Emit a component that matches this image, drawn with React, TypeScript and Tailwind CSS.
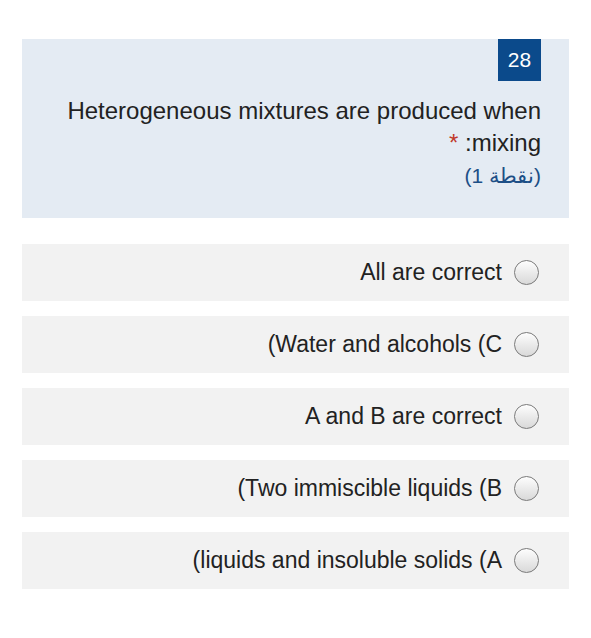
import React from 'react';

const options = [
  'All are correct',
  '(Water and alcohols (C',
  'A and B are correct',
  '(Two immiscible liquids (B',
  '(liquids and insoluble solids (A',
];

const Radio = () => (
  <span className="w-[25px] h-[25px] rounded-full border border-[#7a7a7a] bg-gradient-to-b from-[#fdfdfd] to-[#d9d9d9] shrink-0 shadow-[inset_0_1px_1px_rgba(255,255,255,0.8)]" />
);

export default function App() {
  return (
    <div className="w-[591px] h-[638px] bg-white font-['Liberation_Sans',Arial,sans-serif] text-[#222] pt-[39px] px-[22px]">
      {/* Question header */}
      <div className="bg-[#e4ebf3] h-[179px] pr-[28px] flex flex-col items-end">
        <div className="w-[43px] h-[42px] bg-[#0b4a8b] text-white text-[21px] flex items-center justify-center">
          28
        </div>
        <div className="mt-[14px] text-right text-[24px] leading-[32px]">
          <p>Heterogeneous mixtures are produced when</p>
          <p>
            <span className="text-[#c0392b]">*</span> :mixing
          </p>
          <p className="text-[#1d4f86] text-[21px] leading-[34px]">(1 نقطة)</p>
        </div>
      </div>

      {/* Options */}
      <div className="mt-[26px] flex flex-col gap-[15px]">
        {options.map((o) => (
          <div key={o} className="bg-[#f2f2f2] h-[57px] flex items-center justify-end gap-[12px] pr-[30px]">
            <span className="text-[23px]">{o}</span>
            <Radio />
          </div>
        ))}
      </div>
    </div>
  );
}
